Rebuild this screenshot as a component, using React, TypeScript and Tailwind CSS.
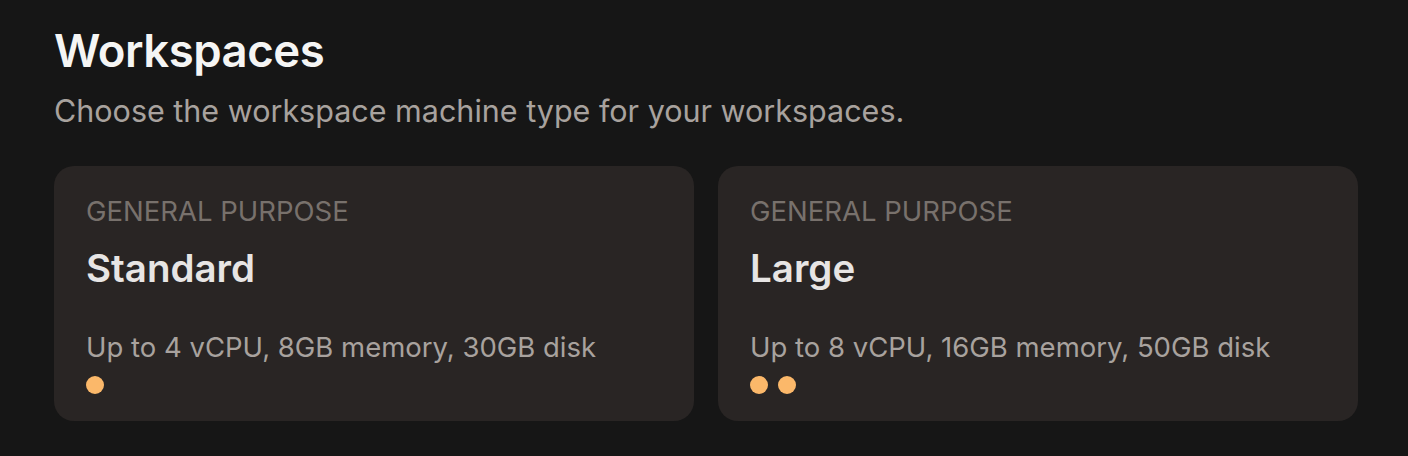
export default function App() {
  const cards = [
    { title: "Standard", desc: "Up to 4 vCPU, 8GB memory, 30GB disk", dots: 1 },
    { title: "Large", desc: "Up to 8 vCPU, 16GB memory, 50GB disk", dots: 2 },
  ];
  return (
    <div className="w-[1408px] h-[456px] bg-[#161616] pl-[54px] pr-[50px] pt-[23px]" style={{ fontFamily: "Inter, 'Noto Sans', sans-serif" }}>
      <h1 className="text-[45.5px] leading-[56px] font-semibold text-[#f5f5f4] tracking-[-0.01em]">Workspaces</h1>
      <p className="text-[30.5px] leading-[40px] text-[#a8a29e] mt-[12px]">Choose the workspace machine type for your workspaces.</p>
      <div className="grid grid-cols-2 gap-[24px] mt-[35px]">
        {cards.map((c) => (
          <div key={c.title} className="h-[255px] rounded-[20px] bg-[#292524] px-[32px] pt-[27px]">
            <div className="text-[27.5px] leading-[36px] text-[#78716c] uppercase">General Purpose</div>
            <div className="text-[38.5px] leading-[48px] font-semibold text-[#e7e5e4] mt-[15px]">{c.title}</div>
            <div className="text-[27.5px] leading-[36px] text-[#a8a29e] mt-[37px]">{c.desc}</div>
            <div className="flex gap-[10px] mt-[11px]">
              {Array.from({ length: c.dots }).map((_, i) => (
                <span key={i} className="w-[18px] h-[18px] rounded-full bg-[#fbb86a]" />
              ))}
            </div>
          </div>
        ))}
      </div>
    </div>
  );
}
